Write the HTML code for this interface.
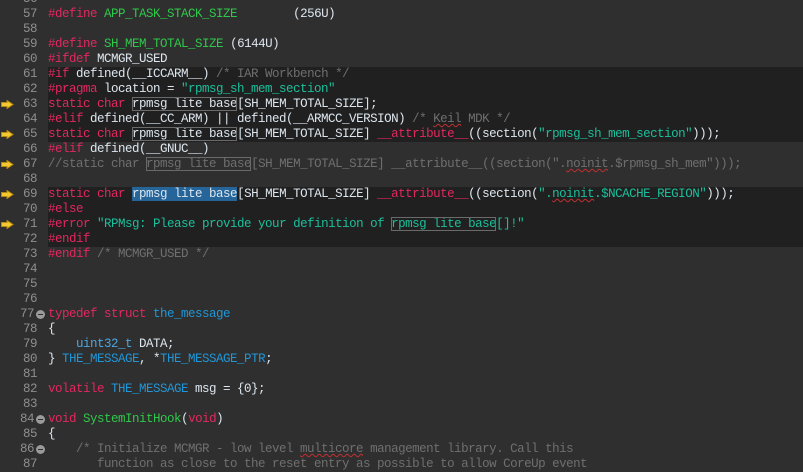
<!DOCTYPE html><html><head><style>
body{margin:0;width:803px;height:472px;background:#2f2f2f;overflow:hidden;position:relative;font-family:"Liberation Mono",monospace;font-size:12.5px;letter-spacing:-0.5px}
.b{position:absolute;left:48px;right:0;background:#202020}
.l{position:absolute;left:0;width:803px;height:15px;line-height:15px;white-space:pre;}
.n{position:absolute;left:0;width:37px;text-align:right;color:#8f8f8f}
.c{position:absolute;left:48px;color:#dde6ee}
.k{color:#e2285f}.g{color:#2fc84a}.s{color:#1cbf9b}.m{color:#6f6f6f}.t{color:#2196d6}.u{color:#4ca6e0}
.x{outline:1px solid #6a6a6a;outline-offset:-1px}
.sel{background:#26659a}
.ar{position:absolute;left:1px;top:3px;width:13px;height:9px}
.f{position:absolute;left:36px;top:3px;width:9px;height:9px;border-radius:50%;background:#9a9a9a}
.f:after{content:"";position:absolute;left:2px;top:4px;width:5px;height:1px;background:#2f2f2f}
.sq{text-decoration:underline wavy #c03030;text-decoration-thickness:1px}
</style></head><body>
<div class="b" style="top:67px;height:75px"></div>
<div class="b" style="top:187px;height:60px"></div>
<svg width="0" height="0" style="position:absolute"><defs><symbol id="a" viewBox="0 0 13 9"><path d="M0.5 2.5H6V0.5L12 4.5L6 8.5V6.5H0.5Z" fill="#f3c830" stroke="#b88a10" stroke-width="1"/></symbol></defs></svg>
<div class="l" style="top:-8px"><span class="n">56</span></div>
<div class="l" style="top:7px"><span class="n">57</span><span class="c"><span class="k">#define</span> <span class="g">APP_TASK_STACK_SIZE</span>        (256U)</span></div>
<div class="l" style="top:22px"><span class="n">58</span></div>
<div class="l" style="top:37px"><span class="n">59</span><span class="c"><span class="k">#define</span> <span class="g">SH_MEM_TOTAL_SIZE</span> (6144U)</span></div>
<div class="l" style="top:52px"><span class="n">60</span><span class="c"><span class="k">#ifdef</span> MCMGR_USED</span></div>
<div class="l" style="top:67px"><span class="n">61</span><span class="c"><span class="k">#if</span> defined(__ICCARM__) <span class="m">/* IAR Workbench */</span></span></div>
<div class="l" style="top:82px"><span class="n">62</span><span class="c"><span class="k">#pragma</span> location = <span class="s">"rpmsg_sh_mem_section"</span></span></div>
<div class="l" style="top:97px"><svg class="ar"><use href="#a"/></svg><span class="n">63</span><span class="c"><span class="k">static char</span> <span class="x">rpmsg lite base</span>[SH_MEM_TOTAL_SIZE];</span></div>
<div class="l" style="top:112px"><span class="n">64</span><span class="c"><span class="k">#elif</span> defined(__CC_ARM) || defined(__ARMCC_VERSION) <span class="m">/* <span class="sq">Keil</span> MDK */</span></span></div>
<div class="l" style="top:127px"><svg class="ar"><use href="#a"/></svg><span class="n">65</span><span class="c"><span class="k">static char</span> <span class="x">rpmsg lite base</span>[SH_MEM_TOTAL_SIZE] <span class="k">__attribute__</span>((section(<span class="s">"rpmsg_sh_mem_section"</span>)));</span></div>
<div class="l" style="top:142px"><span class="n">66</span><span class="c"><span class="k">#elif</span> defined(__GNUC__)</span></div>
<div class="l" style="top:157px"><svg class="ar"><use href="#a"/></svg><span class="n">67</span><span class="c m">//static char <span class="x">rpmsg lite base</span>[SH_MEM_TOTAL_SIZE] __attribute__((section(".<span class="sq">noinit</span>.$rpmsg_sh_mem")));</span></div>
<div class="l" style="top:172px"><span class="n">68</span></div>
<div class="l" style="top:187px"><svg class="ar"><use href="#a"/></svg><span class="n">69</span><span class="c"><span class="k">static char</span> <span class="sel">rpmsg lite base</span>[SH_MEM_TOTAL_SIZE] <span class="k">__attribute__</span>((section(<span class="s">".<span class="sq">noinit</span>.$NCACHE_REGION"</span>)));</span></div>
<div class="l" style="top:202px"><span class="n">70</span><span class="c"><span class="k">#else</span></span></div>
<div class="l" style="top:217px"><svg class="ar"><use href="#a"/></svg><span class="n">71</span><span class="c"><span class="k">#error</span> <span class="s">"RPMsg: Please provide your definition of <span class="x">rpmsg lite base</span>[]!"</span></span></div>
<div class="l" style="top:232px"><span class="n">72</span><span class="c"><span class="k">#endif</span></span></div>
<div class="l" style="top:247px"><span class="n">73</span><span class="c"><span class="k">#endif</span> <span class="m">/* MCMGR_USED */</span></span></div>
<div class="l" style="top:262px"><span class="n">74</span></div>
<div class="l" style="top:277px"><span class="n">75</span></div>
<div class="l" style="top:292px"><span class="n">76</span></div>
<div class="l" style="top:307px"><span class="n" style="width:34px">77</span><span class="f"></span><span class="c"><span class="k">typedef struct</span> <span class="t">the_message</span></span></div>
<div class="l" style="top:322px"><span class="n">78</span><span class="c">{</span></div>
<div class="l" style="top:337px"><span class="n">79</span><span class="c">    <span class="u">uint32_t</span> DATA;</span></div>
<div class="l" style="top:352px"><span class="n">80</span><span class="c">} <span class="t">THE_MESSAGE</span>, *<span class="t">THE_MESSAGE_PTR</span>;</span></div>
<div class="l" style="top:367px"><span class="n">81</span></div>
<div class="l" style="top:382px"><span class="n">82</span><span class="c"><span class="k">volatile</span> <span class="t">THE_MESSAGE</span> msg = {0};</span></div>
<div class="l" style="top:397px"><span class="n">83</span></div>
<div class="l" style="top:412px"><span class="n" style="width:34px">84</span><span class="f"></span><span class="c"><span class="k">void</span> <span class="g">SystemInitHook</span>(<span class="k">void</span>)</span></div>
<div class="l" style="top:427px"><span class="n">85</span><span class="c">{</span></div>
<div class="l" style="top:442px"><span class="n" style="width:34px">86</span><span class="f"></span><span class="c m">    /* Initialize MCMGR - low level <span class="sq">multicore</span> management library. Call this</span></div>
<div class="l" style="top:457px"><span class="n">87</span><span class="c m">       function as close to the reset entry as possible to allow CoreUp event</span></div>
</body></html>
